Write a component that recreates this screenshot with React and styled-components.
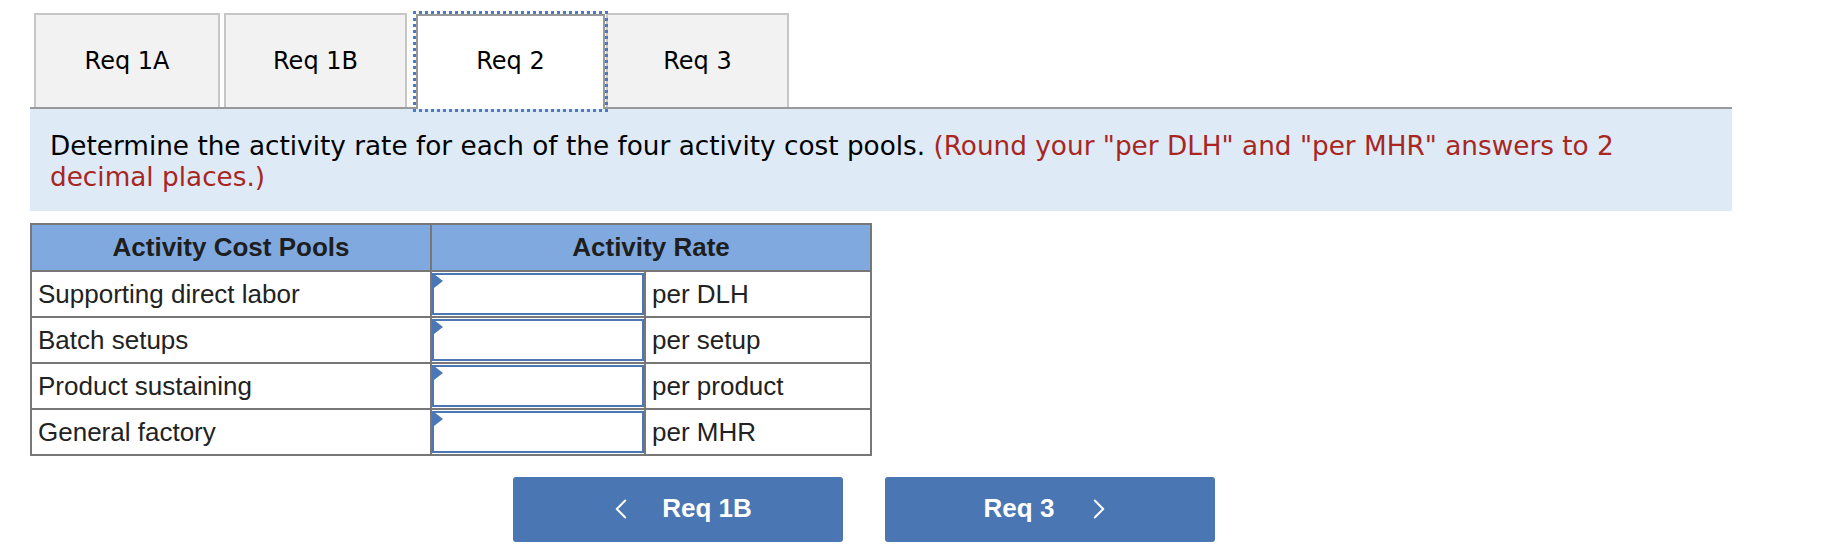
import React from 'react';
import styled, { createGlobalStyle } from 'styled-components';
import { ChevronLeft, ChevronRight } from 'lucide-react';

const GlobalStyle = createGlobalStyle`
  body {
    margin: 0;
    background: #fff;
    font-family: "DejaVu Sans", Verdana, sans-serif;
  }
`;

const Page = styled.div`
  padding: 13px 0 0 30px;
  width: 1702px;
`;

const TabBar = styled.div`
  display: flex;
  gap: 4px;
  padding-left: 4px;
  height: 94px;
  border-bottom: 2px solid #999;
`;

const Tab = styled.button`
  box-sizing: border-box;
  width: ${(p) => p.$w}px;
  height: ${(p) => (p.$active ? 95 : 94)}px;
  margin-top: ${(p) => (p.$active ? 1 : 0)}px;
  margin-left: ${(p) => (p.$active ? 5 : 0)}px;
  margin-right: ${(p) => (p.$active ? -3 : 0)}px;
  padding: 0 0 ${(p) => (p.$active ? 3 : 0)}px 0;
  border: 2px solid ${(p) => (p.$active ? '#999' : '#c6c6c6')};
  border-bottom: none;
  background: ${(p) => (p.$active ? '#fff' : '#f2f2f2')};
  outline: ${(p) => (p.$active ? '3px dotted #4a7bc4' : 'none')};
  outline-offset: 0px;
  position: relative;
  z-index: ${(p) => (p.$active ? 1 : 0)};
  font-family: "DejaVu Sans", Verdana, sans-serif;
  font-size: 24px;
  color: #000;
  cursor: pointer;
`;

const Panel = styled.div`
  box-sizing: border-box;
  height: 102px;
  padding: 22px 110px 0 20px;
  background: #deebf7;
  font-size: 26.3px;
  line-height: 31px;
  color: #000;
`;

const Hint = styled.span`
  color: #a8261f;
`;

const Table = styled.table`
  margin: 12px 0 0 0;
  border-collapse: collapse;
  font-family: "Liberation Sans", Arial, sans-serif;
  font-size: 26px;
  color: #222;
`;

const HeadCell = styled.th`
  height: 45px;
  padding: 0;
  background: #80aadf;
  border: 2px solid #777;
  font-weight: bold;
  text-align: center;
  color: #1e1e1e;
`;

const Cell = styled.td`
  height: 44px;
  width: ${(p) => p.$w}px;
  padding: 0 0 0 6px;
  border: 2px solid #777;
  text-align: left;
  background: #fff;
`;

const InputCell = styled.td`
  width: 212px;
  padding: 0;
  border: 2px solid #777;
  position: relative;
  background: #fff;
`;

const Input = styled.input`
  box-sizing: border-box;
  display: block;
  width: 100%;
  height: 42px;
  border: 2px solid #4b77b6;
  padding: 0 6px;
  font-family: "Liberation Sans", Arial, sans-serif;
  font-size: 24px;
  outline: none;
`;

const Marker = styled.span`
  position: absolute;
  left: 2px;
  top: 2px;
  width: 0;
  height: 0;
  border-top: 7px solid transparent;
  border-bottom: 7px solid transparent;
  border-left: 9px solid #4b77b6;
`;

const NavRow = styled.div`
  display: flex;
  gap: 42px;
  margin: 21px 0 0 483px;
`;

const NavButton = styled.button`
  display: flex;
  align-items: center;
  justify-content: center;
  gap: ${(p) => (p.$prev ? 24 : 28)}px;
  width: 330px;
  height: 65px;
  padding: 0 0 2px 0;
  border: none;
  border-radius: 3px;
  background: #4a76b3;
  color: #fff;
  font-family: "Liberation Sans", Arial, sans-serif;
  font-size: 26px;
  font-weight: bold;
  cursor: pointer;
`;

const tabs = [
  { label: 'Req 1A', w: 186 },
  { label: 'Req 1B', w: 183 },
  { label: 'Req 2', w: 189, active: true },
  { label: 'Req 3', w: 183 },
];

const rows = [
  ['Supporting direct labor', 'per DLH'],
  ['Batch setups', 'per setup'],
  ['Product sustaining', 'per product'],
  ['General factory', 'per MHR'],
];

export default function App() {
  return (
    <>
      <GlobalStyle />
      <Page>
        <TabBar>
          {tabs.map((t) => (
            <Tab key={t.label} $w={t.w} $active={t.active}>
              {t.label}
            </Tab>
          ))}
        </TabBar>
        <Panel>
          Determine the activity rate for each of the four activity cost pools.{' '}
          <Hint>(Round your "per DLH" and "per MHR" answers to 2 decimal places.)</Hint>
        </Panel>
        <Table>
          <thead>
            <tr>
              <HeadCell>Activity Cost Pools</HeadCell>
              <HeadCell colSpan={2}>Activity Rate</HeadCell>
            </tr>
          </thead>
          <tbody>
            {rows.map(([pool, unit]) => (
              <tr key={pool}>
                <Cell $w={392}>{pool}</Cell>
                <InputCell>
                  <Input type="text" />
                  <Marker />
                </InputCell>
                <Cell $w={218}>{unit}</Cell>
              </tr>
            ))}
          </tbody>
        </Table>
        <NavRow>
          <NavButton $prev>
            <ChevronLeft size={34} strokeWidth={1.4} />
            Req 1B
          </NavButton>
          <NavButton>
            Req 3
            <ChevronRight size={34} strokeWidth={1.4} />
          </NavButton>
        </NavRow>
      </Page>
    </>
  );
}
